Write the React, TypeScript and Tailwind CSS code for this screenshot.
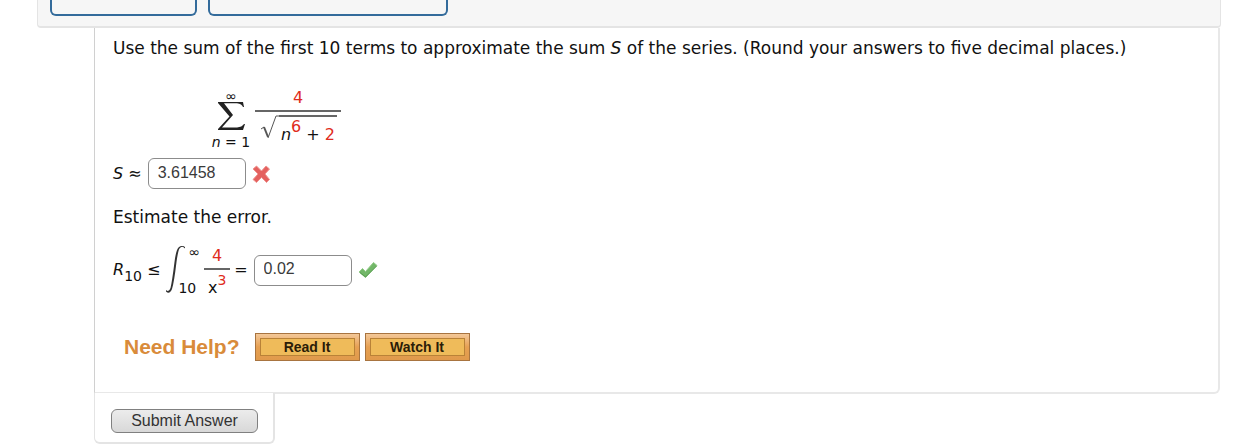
import React, { useState } from 'react';

interface AnswerBoxProps {
  label: string;
  initial: string;
}

const AnswerBox: React.FC<AnswerBoxProps> = ({ label, initial }) => {
  const [value, setValue] = useState(initial);
  return (
    <input
      type="text"
      aria-label={label}
      value={value}
      onChange={(e) => setValue(e.target.value)}
      className="h-[31px] w-[98px] rounded-md border border-[#8c8c8c] bg-white px-[9px] pb-0.5 font-['Liberation_Sans',Arial,sans-serif] text-base text-[#3a3a3a]"
    />
  );
};

const HelpButton: React.FC<{ children: React.ReactNode }> = ({ children }) => (
  <button
    type="button"
    className="h-7 w-[105px] border border-[#a87440] bg-gradient-to-b from-[#f3c898] via-[#e6a052] to-[#e09a4c] p-1 font-['Liberation_Sans',Arial,sans-serif] text-sm font-bold text-[#2b1d08]"
  >
    <span className="flex h-full items-center justify-center border border-[#b98237] bg-[#efbb5a]">{children}</span>
  </button>
);

const CrossIcon = () => (
  <svg className="h-5 w-5" viewBox="0 0 20 20" role="img" aria-label="Incorrect">
    <path d="M4.500 2 L9.500 7 L14 2 L17.500 5 L13 10 L17.500 15.500 L14.500 18.500 L9.500 13.500 L4.500 18.500 L1 15.500 L6 10 L1 5 Z" fill="#e4615f" stroke="#ef9490" strokeWidth="1" strokeLinejoin="round" />
  </svg>
);

const CheckIcon = () => (
  <svg className="h-5 w-5" viewBox="0 0 20 20" role="img" aria-label="Correct">
    <path d="M1 12 L4.500 8.500 L7.500 11.500 L15.500 2.500 L19 5.500 L7.500 17.500 Z" fill="#72b768" stroke="#93cb89" strokeWidth="1" strokeLinejoin="round" />
    <path d="M2 12.500 L7.500 17 L18.500 6" fill="none" stroke="#559a4e" strokeWidth="1" />
  </svg>
);

const SeriesFormula = () => (
  <div className="flex pl-[98px]">
    <div className="flex w-10 flex-col items-center pt-0.5">
      <span className="text-sm leading-3">∞</span>
      <svg className="h-7 w-[27px]" viewBox="0 0 27 28" fill="#222" aria-hidden="true">
        <path d="M0 0 H25 L26 5 H25 Q24 2 19 1.200 H6 L15 13 L4 25.500 H19 Q24 25 26 22 H27 L25 28 H0 V27 L11.500 14.500 L0 1 Z" />
      </svg>
      <span className="text-sm leading-6 whitespace-nowrap"><i>n</i> = 1</span>
    </div>
    <div className="ml-1 flex w-[86px] flex-col">
      <span className="border-b-2 border-[#666] pb-0.5 text-center text-base leading-5 text-[#e02b20]">4</span>
      <div className="flex pt-[3px] pl-1">
        <svg className="h-6 w-5 shrink-0" viewBox="0 0 20 24" fill="none" stroke="#555" aria-hidden="true">
          <path d="M2 14 L5 12" />
          <path d="M5 12 L9 22" strokeWidth="2" />
          <path d="M9 23 L17 1 H20" />
        </svg>
        <span className="w-[58px] border-t-2 border-[#666] pt-1.5 text-center text-base leading-6 whitespace-nowrap">
          <i>n</i><sup className="-top-2 text-base leading-none text-[#e02b20]">6</sup> + <span className="text-[#e02b20]">2</span>
        </span>
      </div>
    </div>
  </div>
);

const IntegralFormula = () => (
  <div className="flex h-12 items-center">
    <span className="text-base"><i>R</i><sub className="-bottom-1.5 text-sm">10</sub> ≤</span>
    <svg className="ml-1.5 h-12 w-5" viewBox="0 0 20 48" fill="#333" aria-hidden="true">
      <path d="M19 2.500 Q16 -1 13.500 2.500 Q12 5 10.500 16 Q8 37 6 43 Q3.500 49 0 45.500 V44 Q3 46.500 4.500 42 Q6 36 8.500 16 Q10 4 12.500 1.500 Q16 -1.500 19 1 Z" />
    </svg>
    <div className="-ml-2 flex h-full flex-col justify-between text-sm">
      <span className="pl-2.5 leading-3">∞</span>
      <span className="leading-3">10</span>
    </div>
    <div className="ml-1 flex w-[26px] flex-col items-center self-start text-base">
      <span className="w-full border-b-2 border-[#666] pb-0.5 text-center leading-5 text-[#e02b20]">4</span>
      <span className="leading-9">x<sup className="-top-2 text-sm leading-none text-[#e02b20]">3</sup></span>
    </div>
    <span className="mr-1.5 ml-1 text-base">=</span>
    <AnswerBox label="Error estimate" initial="0.02" />
    <span className="ml-1.5"><CheckIcon /></span>
  </div>
);

export default function App() {
  return (
    <div className="bg-white pr-5 pl-[37px] font-['DejaVu_Sans',Verdana,sans-serif] text-[17px] text-[#111]">
      <div className="flex h-7 items-start gap-[11px] rounded-b-sm border-x border-b-2 border-[#e4e4e4] bg-[#f6f6f6] pl-3">
        <button type="button" aria-label="Previous question" className="h-4 w-[147px] rounded-b-md border-x-2 border-b-2 border-[#336b9b]" />
        <button type="button" aria-label="Next question" className="h-4 w-60 rounded-b-md border-x-2 border-b-2 border-[#336b9b]" />
      </div>

      <form className="mr-px ml-[57px]" onSubmit={(e) => e.preventDefault()}>
        <div className="rounded-br-md border-r-2 border-b-2 border-l border-r-[#e8e8e8] border-b-[#e8e8e8] border-l-[#d0d0d0] pt-2 pb-[31px] pl-[18px]">
          <p className="leading-6">
            Use the sum of the first 10 terms to approximate the sum <i>S</i> of the series. (Round your answers to five decimal places.)
          </p>
          <div className="mt-7">
            <SeriesFormula />
          </div>
          <div className="mt-1 flex items-center">
            <span className="mr-1.5 text-base"><i>S</i> ≈</span>
            <AnswerBox label="Sum S" initial="3.61458" />
            <span className="ml-1.5"><CrossIcon /></span>
          </div>
          <p className="mt-4 leading-6">Estimate the error.</p>
          <div className="mt-[17px]">
            <IntegralFormula />
          </div>
          <div className="mt-[39px] flex items-center gap-[5px] pl-[11px]">
            <h2 className="mr-2.5 font-['Liberation_Sans',Arial,sans-serif] text-[21px] leading-7 font-bold text-[#d98b3a]">Need Help?</h2>
            <HelpButton>Read It</HelpButton>
            <HelpButton>Watch It</HelpButton>
          </div>
        </div>
        <div className="-mt-px h-[51px] w-[181px] rounded-b-md border-x-2 border-b-2 border-l border-[#e4e4e4] bg-white px-4 pt-4">
          <button type="submit" className="flex h-6 w-[147px] items-center justify-center rounded-md border border-[#808080] bg-gradient-to-b from-[#ececec] to-[#d8d8d8] font-['Liberation_Sans',Arial,sans-serif] text-base text-[#333]">
            Submit Answer
          </button>
        </div>
      </form>
    </div>
  );
}
